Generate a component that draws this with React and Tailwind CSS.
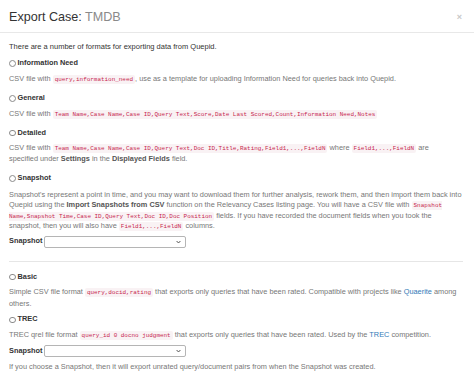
const Radio = ({ label, className }) => (
  <div className={`flex items-center h-[11px] ${className}`}>
    <span className="w-[6.5px] h-[6.5px] rounded-full border border-[#8a8a8a] bg-white mr-[2px]" />
    <span className="font-bold text-[#333]">{label}</span>
  </div>
);

const Code = ({ children }) => (
  <code className="font-['Liberation_Mono',monospace] text-[5.95px] leading-none text-[#c7254e] bg-[#f9f2f4] px-[2px] py-[1px] rounded-[2px]">
    {children}
  </code>
);

const SnapshotSelect = ({ className }) => (
  <div className={`flex items-center ${className}`}>
    <span className="font-bold text-[#333] mr-[2px]">Snapshot</span>
    <div className="w-[142px] h-[12px] border border-[#b5b5b5] rounded-[2px] bg-white flex items-center justify-end pr-[4px]">
      <svg width="5" height="4" viewBox="0 0 5 4">
        <path d="M0.6 1 L2.5 3 L4.4 1" fill="none" stroke="#444" strokeWidth="0.9" />
      </svg>
    </div>
  </div>
);

export default function App() {
  return (
    <div className="w-[474px] h-[384px] overflow-hidden bg-white font-['Liberation_Sans',Arial,sans-serif] text-[7.35px] leading-[10.8px]">
      {/* header */}
      <div className="flex h-[33px] items-center justify-between pl-[9px] pr-[12px] pt-[2px] border-b border-[#e8e8e8]">
        <h4 className="text-[12.6px] leading-none text-[#333]">
          Export Case: <span className="text-[#8a8a8a]">TMDB</span>
        </h4>
        <span className="text-[9px] font-bold text-[#c8c8c8] leading-none">×</span>
      </div>

      {/* body */}
      <div className="pl-[9px] pr-[11px] pt-[9px]">
        <p className="text-[#333] text-[7.5px]">There are a number of formats for exporting data from Quepid.</p>

        <Radio label="Information Need" className="mt-[5px]" />
        <p className="mt-[5.5px] text-[#777]">
          CSV file with <Code>query,information_need</Code>, use as a template for uploading Information Need for queries back into Quepid.
        </p>

        <Radio label="General" className="mt-[7.7px]" />
        <p className="mt-[5px] text-[#777]">
          CSV file with <Code>Team Name,Case Name,Case ID,Query Text,Score,Date Last Scored,Count,Information Need,Notes</Code>
        </p>

        <Radio label="Detailed" className="mt-[8.1px]" />
        <p className="mt-[4.5px] text-[#777]">
          CSV file with <Code>Team Name,Case Name,Case ID,Query Text,Doc ID,Title,Rating,Field1,...,FieldN</Code> where{" "}
          <Code>Field1,...,FieldN</Code> are
          <br />
          specified under <b className="text-[#555]">Settings</b> in the <b className="text-[#555]">Displayed Fields</b> field.
        </p>

        <Radio label="Snapshot" className="mt-[8.3px]" />
        <p className="mt-[5.5px] text-[#777] leading-[10.5px]">
          Snapshot's represent a point in time, and you may want to download them for further analysis, rework them, and then import them back into Quepid using the{" "}
          <b className="text-[#555]">Import Snapshots from CSV</b> function on the Relevancy Cases listing page. You will have a CSV file with{" "}
          <Code>Snapshot Name,Snapshot Time,Case ID,Query Text,Doc ID,Doc Position</Code> fields. If you have recorded the document fields when you took the snapshot, then you will also have{" "}
          <Code>Field1,...,FieldN</Code> columns.
        </p>

        <SnapshotSelect className="mt-[4px]" />

        <hr className="mt-[13px] border-t border-[#e6e6e6]" />

        <Radio label="Basic" className="mt-[10px]" />
        <p className="mt-[3.5px] text-[#777] leading-[11.6px]">
          Simple CSV file format <Code>query,docid,rating</Code> that exports only queries that have been rated. Compatible with projects like{" "}
          <span className="text-[#337ab7]">Quaerite</span> among others.
        </p>

        <Radio label="TREC" className="mt-[5px]" />
        <p className="mt-[5.2px] text-[#777]">
          TREC qrel file format <Code>query_id 0 docno judgment</Code> that exports only queries that have been rated. Used by the{" "}
          <span className="text-[#337ab7]">TREC</span> competition.
        </p>

        <SnapshotSelect className="mt-[4px]" />

        <p className="mt-[4.5px] text-[#777]">
          If you choose a Snapshot, then it will export unrated query/document pairs from when the Snapshot was created.
        </p>

        <hr className="mt-[11px] border-t border-[#e6e6e6]" />
      </div>
    </div>
  );
}
